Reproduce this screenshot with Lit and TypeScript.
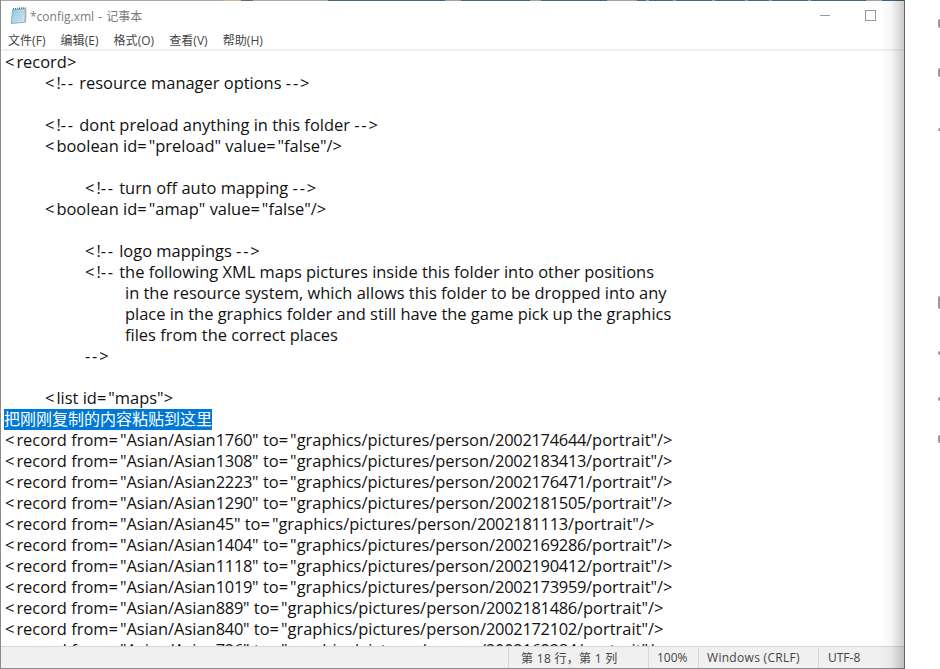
import { LitElement, html, css } from "lit";
import { customElement } from "lit/decorators.js";

type Line = [number, string];
const lines: Line[] = [
  [0, "<record>"],
  [1, "<!-- resource manager options -->"],
  [0, ""],
  [1, "<!-- dont preload anything in this folder -->"],
  [1, '<boolean id="preload" value="false"/>'],
  [0, ""],
  [2, "<!-- turn off auto mapping -->"],
  [1, '<boolean id="amap" value="false"/>'],
  [0, ""],
  [2, "<!-- logo mappings -->"],
  [2, "<!-- the following XML maps pictures inside this folder into other positions"],
  [3, "in the resource system, which allows this folder to be dropped into any"],
  [3, "place in the graphics folder and still have the game pick up the graphics"],
  [3, "files from the correct places"],
  [2, "-->"],
  [0, ""],
  [1, '<list id="maps">'],
];
const recs: [string, string][] = [
  ["1760", "2002174644"], ["1308", "2002183413"], ["2223", "2002176471"], ["1290", "2002181505"],
  ["45", "2002181113"], ["1404", "2002169286"], ["1118", "2002190412"], ["1019", "2002173959"],
  ["889", "2002181486"], ["840", "2002172102"], ["726", "2002169284"],
];

// The reference face sets < > = and hyphens wider and digits narrower than the installed one.
const tokens = (t: string) =>
  t.split(/([<>=]|-+|\d+)/).map((p) => {
    if (!p) return "";
    if (/^[<>=]$/.test(p)) return html`<span class="sym">${p}</span>`;
    if (/^-+$/.test(p)) return html`<span class="dash">${p}</span>`;
    if (/^\d+$/.test(p)) return html`<span class="num">${p}</span>`;
    return p;
  });

@customElement("app-root")
export class AppRoot extends LitElement {
  static styles = css`
    :host { display: block; width: 940px; height: 669px; overflow: hidden; background: #fff; position: relative;
      font-family: "Open Sans", "Noto Sans CJK SC", sans-serif; }
    .win { width: 905px; height: 669px; box-sizing: border-box; display: flex; flex-direction: column;
      border-left: 1px solid #8a8a8a; border-right: 1px solid #666; position: relative; overflow: hidden; }
    .strip { height: 1px; flex: none;
      background: linear-gradient(to right,
        #a8a8a8 0 222px, #c8b898 222px 240px, #6a6a60 240px 252px, #aaa 252px 327px, #3d6a80 327px 444px,
        #9aa4aa 444px 460px, #3d6a80 460px 529px, #9aa4aa 529px 540px, #3d6a80 540px 606px,
        #9aa4aa 606px 636px, #3d6a80 636px 645px, #9aa4aa 645px 648px, #3d6a80 648px 672px,
        #9aa4aa 672px 675px, #3d6a80 675px 711px, #9aa4aa 711px 714px, #3d6a80 714px 744px,
        #9aa4aa 744px 747px, #3d6a80 747px 768px, #9aa4aa 768px 771px, #3d6a80 771px 807px,
        #9aa4aa 807px 810px, #3d6a80 810px 865px, #9aa4aa 865px 881px, #3d6a80 881px); }
    .title { height: 29px; display: flex; align-items: center; padding-left: 9px; gap: 3px; font-size: 12px; color: #7a7a7a; flex: none; }
    .title span { word-spacing: 1px; }
    .ctrl { margin-left: auto; display: flex; align-items: center; gap: 35px; padding-right: 28px; }
    .min { width: 10px; height: 1px; background: #999; }
    .max { width: 9px; height: 9px; border: 1px solid #999; }
    .menu { height: 19px; box-sizing: border-box; padding: 1px 0 0 7px; display: flex; align-items: center; gap: 15px; font-size: 12px; color: #444; flex: none; letter-spacing: 0.05px; }
    .sep { height: 2px; background: #f0f0f0; flex: none; }
    .edit { flex: 1; min-height: 0; overflow: hidden; padding-left: 4px; font-size: 16.45px; line-height: 21px; color: #111; }
    .ln { height: 21px; white-space: pre; }
    .sym { letter-spacing: 2px; }
    .dash { letter-spacing: 1.8px; }
    .num { letter-spacing: -0.3px; }
    .i1 { padding-left: 40px; } .i2 { padding-left: 80px; } .i3 { padding-left: 120px; }
    .sel { background: #0078d7; color: #fff; display: inline-block; height: 21px; font-size: 16px; margin-left: -1px; }
    .status { height: 23px; flex: none; background: #f0f0f0; border-top: 1px solid #d7d7d7; border-bottom: 1px solid #8a8a8a; box-sizing: border-box;
      display: flex; font-size: 12px; color: #444; padding-left: 507px; }
    .status div { border-left: 1px solid #d7d7d7; display: flex; align-items: center; padding-left: 8px; box-sizing: border-box; }
    .status .c1 { width: 140px; padding-left: 12px; letter-spacing: 0.3px; }
    .c2 { width: 50px; }
    .status .c3 { width: 120px; letter-spacing: 0.3px; }
    .status .c4 { flex: 1; padding-left: 9px; }
    .shadow { position: absolute; top: 0; bottom: 0; right: 0; width: 24px; pointer-events: none;
      background: linear-gradient(to right, rgba(0,0,0,0), rgba(0,0,0,0.03) 45%, rgba(0,0,0,0.2)); }
    .bits { position: absolute; left: 938px; top: 0; width: 2px; height: 669px; }
    .bit { position: absolute; left: 0; width: 2px; height: 7px; background: #9a9a9a; border-radius: 2px 0 0 2px; filter: blur(0.5px); }
  `;

  render() {
    return html`
      <div class="win">
        <div class="strip"></div>
        <div class="title">
          <svg width="17" height="17" viewBox="0 0 17 17">
            <defs>
              <linearGradient id="pg" x1="0" y1="0" x2="1" y2="1">
                <stop offset="0" stop-color="#8cc2e2"/>
                <stop offset="1" stop-color="#dceff7"/>
              </linearGradient>
            </defs>
            <path d="M2.6 2.8 L15.4 1.6 L15 15.2 L1.2 16.4 Z" fill="url(#pg)" stroke="#6f9ab2" stroke-width="0.8"/>
            <path d="M15.9 2.2 L15.6 15.4" stroke="#b7a98a" fill="none"/>
            <path d="M4.6 6 L13.4 5.2 M4.4 8.5 L13.2 7.7 M4.2 11 L13 10.2 M4 13.5 L12.8 12.7" stroke="#a9cde0" stroke-width="0.8" fill="none"/>
            <path d="M3 1.8 L15.6 0.7" stroke="#5c6f7a" stroke-width="1.4" stroke-dasharray="1 1" fill="none"/>
          </svg>
          <span>*config.xml - 记事本</span>
          <div class="ctrl"><div class="min"></div><div class="max"></div></div>
        </div>
        <div class="menu">
          <span>文件(F)</span><span>编辑(E)</span><span>格式(O)</span><span>查看(V)</span><span>帮助(H)</span>
        </div>
        <div class="sep"></div>
        <div class="edit">
          ${lines.map(([i, t]) => html`<div class="ln i${i}">${tokens(t)}</div>`)}
          <div class="ln"><span class="sel">把刚刚复制的内容粘贴到这里</span></div>
          ${recs.map(([a, b]) => html`<div class="ln">${tokens(`<record from="Asian/Asian${a}" to="graphics/pictures/person/${b}/portrait"/>`)}</div>`)}
        </div>
        <div class="status">
          <div class="c1">第 18 行，第 1 列</div>
          <div class="c2">100%</div>
          <div class="c3">Windows (CRLF)</div>
          <div class="c4">UTF-8</div>
        </div>
        <div class="shadow"></div>
      </div>
      <div class="bits">
        <div class="bit" style="top:19px;height:9px"></div>
        <div class="bit" style="top:68px;height:9px"></div>
        <div class="bit" style="top:128px;height:3px"></div>
        <div class="bit" style="top:296px;height:13px"></div>
        <div class="bit" style="top:351px;height:4px"></div>
        <div class="bit" style="top:397px;height:4px"></div>
        <div class="bit" style="top:435px;height:8px"></div>
      </div>
    `;
  }
}
